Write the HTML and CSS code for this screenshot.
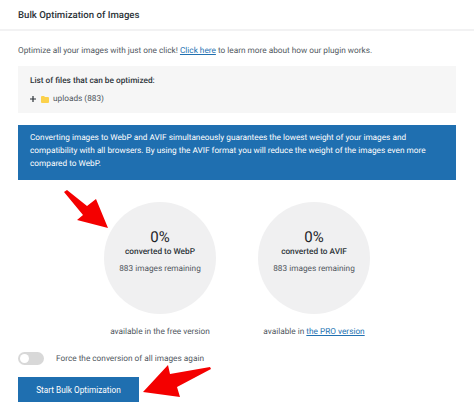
FILE: index.html
```html
<!DOCTYPE html>
<html lang="en">
<head>
    <meta charset="UTF-8">
    <title>Bulk Optimization of Images</title>
    <link rel="stylesheet" href="styles.css">
</head>
<body>
    <h2 class="title">Bulk Optimization of Images</h2>
    <div class="content">
        <p class="intro">Optimize all your images with just one click! <a href="#">Click here</a> to learn more about how our plugin works.</p>
        <div class="files">
            <div class="files-title">List of files that can be optimized:</div>
            <div class="files-row">
                <svg class="plus" width="6" height="6" viewBox="0 0 6 6"><path d="M3 0v6M0 3h6" stroke="#2c3338" stroke-width="1.2"/></svg>
                <svg class="folder" width="8" height="7" viewBox="0 0 8 7"><path d="M0 1q0-1 1-1h2l1 1h3q1 0 1 1v4q0 1-1 1H1q-1 0-1-1z" fill="#fbd14b"/></svg>
                <span>uploads (883)</span>
            </div>
        </div>
        <div class="notice">Converting images to WebP and AVIF simultaneously guarantees the lowest weight of your images and compatibility with all browsers. By using the AVIF format you will reduce the weight of the images even more compared to WebP.</div>
        <div class="stats">
            <div class="stat">
                <div class="circle">
                    <div class="percent">0%</div>
                    <div class="converted">converted to WebP</div>
                    <div class="remaining">883 images remaining</div>
                </div>
                <div class="available">available in the free version</div>
            </div>
            <div class="stat">
                <div class="circle">
                    <div class="percent">0%</div>
                    <div class="converted">converted to AVIF</div>
                    <div class="remaining">883 images remaining</div>
                </div>
                <div class="available">available in <a href="#">the PRO version</a></div>
            </div>
        </div>
        <div class="force">
            <span class="toggle"><span class="knob"></span></span>
            <span>Force the conversion of all images again</span>
        </div>
        <button class="start">Start Bulk Optimization</button>
    </div>
    <svg class="arrows" width="474" height="420" viewBox="0 0 474 420">
        <polygon points="64,192 67,190 87,206 96,199 108,228 77,220 83,215" fill="#f40000"/>
        <polygon points="143,392 168,365 170,374 210,367 211,369 177,387 180,397" fill="#f40000"/>
    </svg>
</body>
</html>
```

FILE: styles.css
```css
body {
    margin: 0;
    position: relative;
    width: 474px;
    height: 420px;
    overflow: hidden;
    background: #fff;
    font-family: Roboto, sans-serif;
    font-size: 8.25px;
    color: #50575e;
    text-rendering: geometricPrecision;
}
.title {
    margin: 0;
    padding: 9px 18px 0;
    box-sizing: border-box;
    border-bottom: 2px solid #f2f2f3;
    height: 31px;
    font-size: 9.6px;
    line-height: 13px;
    font-weight: 500;
    color: #2c3338;
}
.content {
    padding: 0 18px;
}
a {
    color: #2271b1;
}
.intro {
    margin: 0;
    padding-top: 14px;
    height: 35px;
    box-sizing: border-box;
    line-height: 12px;
}
.files {
    height: 47px;
    box-sizing: border-box;
    padding: 9px 12px;
    background: #f6f6f6;
}
.files-title {
    line-height: 12px;
    font-weight: 500;
    color: #2c3338;
}
.files-row {
    display: flex;
    align-items: center;
    margin-top: 6px;
    line-height: 12px;
}
.plus {
    margin-right: 5px;
}
.folder {
    margin-right: 4px;
}
.notice {
    margin-top: 12px;
    height: 55px;
    box-sizing: border-box;
    padding: 7px 12px;
    background: #1f6fb0;
    color: #fff;
    line-height: 13px;
}
.stats {
    display: flex;
    justify-content: center;
    gap: 42px;
    margin-top: 22px;
}
.stat {
    width: 112px;
    text-align: center;
}
.circle {
    height: 112px;
    box-sizing: border-box;
    padding-top: 26px;
    border-radius: 50%;
    background: #f0f0f1;
}
.percent {
    font-size: 15px;
    line-height: 19px;
    color: #1d2327;
}
.converted {
    line-height: 11px;
    font-weight: 500;
    color: #2c3338;
}
.remaining {
    margin-top: 5px;
    line-height: 12px;
}
.available {
    margin: 12px -20px 0;
    line-height: 12px;
}
.force {
    display: flex;
    align-items: center;
    gap: 12px;
    margin-top: 14px;
    height: 13px;
}
.toggle {
    display: block;
    width: 26px;
    height: 13px;
    padding: 2px;
    box-sizing: border-box;
    border-radius: 7px;
    background: #d8d8d8;
}
.knob {
    display: block;
    width: 9px;
    height: 9px;
    border-radius: 50%;
    background: #fff;
}
.start {
    display: block;
    margin-top: 12px;
    width: 121px;
    height: 25px;
    padding: 0;
    border: none;
    background: #1f6fb0;
    color: #fff;
    font-family: inherit;
    font-size: 8.25px;
}
.arrows {
    position: absolute;
    left: 0;
    top: 0;
    pointer-events: none;
}
```
